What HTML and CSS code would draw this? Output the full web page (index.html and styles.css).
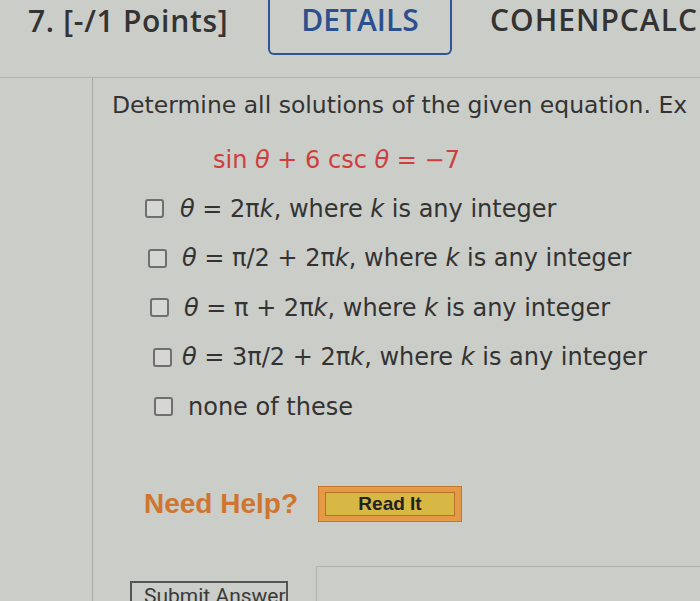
FILE: index.html
```html
<!DOCTYPE html>
<html>
<head>
<meta charset="utf-8">
<link rel="stylesheet" href="styles.css">
</head>
<body>
<div class="page">
  <header class="head">
    <div class="num">7. [-/1 Points]</div>
    <div class="details">DETAILS</div>
    <div class="course">COHENPCALC</div>
  </header>
  <main class="content">
    <p class="question">Determine all solutions of the given equation. Ex</p>
    <p class="equation">sin <i class="th">θ</i> + 6 csc <i class="th">θ</i> = −7</p>
    <ul class="options">
      <li class="opt o1"><span class="box"></span><span class="txt"><i class="th">θ</i> = 2π<i>k</i>, where <i>k</i> is any integer</span></li>
      <li class="opt o2"><span class="box"></span><span class="txt"><i class="th">θ</i> = π/2 + 2π<i>k</i>, where <i>k</i> is any integer</span></li>
      <li class="opt o3"><span class="box"></span><span class="txt"><i class="th">θ</i> = π + 2π<i>k</i>, where <i>k</i> is any integer</span></li>
      <li class="opt o4"><span class="box"></span><span class="txt"><i class="th">θ</i> = 3π/2 + 2π<i>k</i>, where <i>k</i> is any integer</span></li>
      <li class="opt o5"><span class="box"></span><span class="txt">none of these</span></li>
    </ul>
    <div class="help">
      <span class="need">Need Help?</span>
      <span class="readit"><span class="readit-in">Read It</span></span>
    </div>
    <div class="bottom">
      <span class="submit">Submit Answer</span>
      <span class="field"></span>
    </div>
  </main>
</div>
</body>
</html>
```
FILE: styles.css
```css
html, body {
  margin: 0;
  padding: 0;
}
body {
  background: #cbcdc8;
  width: 700px;
  height: 601px;
  overflow: hidden;
}
.page {
  width: 700px;
  height: 601px;
  overflow: hidden;
}
.head {
  display: flex;
  align-items: flex-start;
  height: 77px;
  border-bottom: 1px solid #b1b3ae;
  font-family: "Open Sans", "Noto Sans", sans-serif;
  font-weight: 600;
  font-size: 30px;
  white-space: nowrap;
}
.num {
  color: #343434;
  padding-left: 28px;
  line-height: 42px;
  width: 240px;
  box-sizing: border-box;
  letter-spacing: 0.7px;
}
.details {
  color: #2c4f8e;
  width: 184px;
  height: 55px;
  margin-left: 28px;
  box-sizing: border-box;
  border: 2px solid #2f5596;
  border-top: none;
  border-radius: 0 0 6px 6px;
  text-align: center;
  line-height: 40px;
}
.course {
  color: #333;
  margin-left: 38px;
  line-height: 40px;
  letter-spacing: 1px;
}
.content {
  margin-left: 92px;
  border-left: 1px solid #a9aba6;
  padding-left: 19px;
  height: 523px;
  font-family: "DejaVu Sans", Verdana, sans-serif;
  color: #333;
}
.question {
  margin: 0;
  padding-top: 12px;
  font-size: 23.5px;
  line-height: 30px;
  white-space: nowrap;
}
.equation {
  margin: 26px 0 0 101px;
  font-size: 24px;
  line-height: 28px;
  color: #cf3e3e;
}
.th {
  font-style: italic;
}
.options {
  list-style: none;
  margin: 10px 0 0 0;
  padding: 0;
}
.opt {
  display: flex;
  align-items: center;
  height: 49.5px;
  font-size: 24px;
  white-space: nowrap;
}
.box {
  width: 15px;
  height: 15px;
  border: 2px solid #6f706e;
  border-radius: 3px;
  background: #d6d7d4;
  flex: none;
}
.o1 { padding-left: 33px; }
.o1 .txt { margin-left: 16px; }
.o2 { padding-left: 36px; }
.o2 .txt { margin-left: 15px; }
.o3 { padding-left: 38px; }
.o3 .txt { margin-left: 15px; }
.o4 { padding-left: 41px; }
.o4 .txt { margin-left: 10px; }
.o5 { padding-left: 42px; }
.o5 .txt { margin-left: 15px; }
.help {
  display: flex;
  align-items: center;
  margin: 54px 0 0 32px;
}
.need {
  font-family: "Liberation Sans", Arial, sans-serif;
  font-weight: bold;
  font-size: 28px;
  color: #cf7530;
}
.readit {
  margin-left: 20px;
  background: #e59a48;
  padding: 5px 6px;
  border: 1px solid #c4782e;
}
.readit-in {
  display: block;
  width: 128px;
  height: 22px;
  background: #d8b845;
  border: 1px solid #b5722a;
  text-align: center;
  font-family: "Liberation Sans", Arial, sans-serif;
  font-weight: bold;
  font-size: 19px;
  line-height: 22px;
  color: #222;
}
.bottom {
  display: flex;
  align-items: flex-start;
  margin: 44px 0 0 18px;
}
.submit {
  margin-top: 15px;
  width: 161px;
  box-sizing: border-box;
  border: 2px solid #555;
  padding: 0 0 0 12px;
  font-family: "Roboto", "Liberation Sans", sans-serif;
  font-size: 21px;
  line-height: 26px;
  color: #3a3a3a;
  white-space: nowrap;
}
.field {
  margin-left: 28px;
  width: 400px;
  height: 60px;
  border-top: 1px solid #b0b2ad;
  border-left: 1px solid #b0b2ad;
}
```
